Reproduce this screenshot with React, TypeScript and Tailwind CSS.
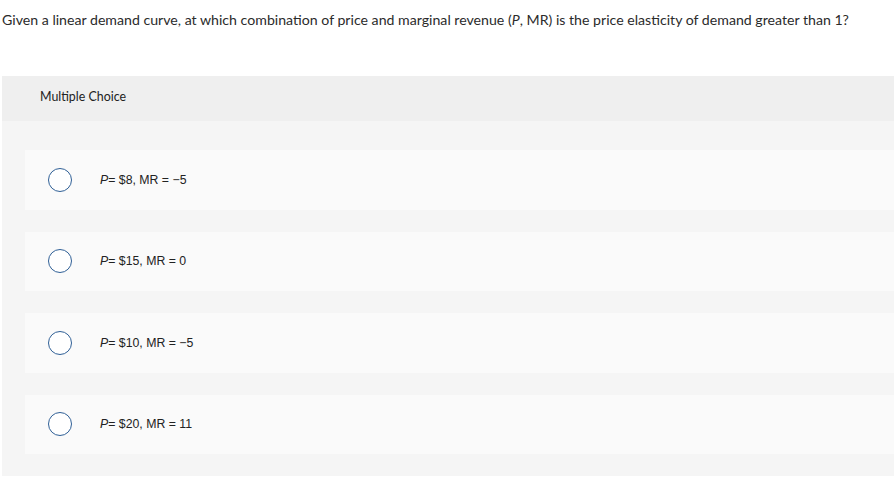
import React from "react";

const options = [
  { price: "$8", mr: "\u22125" },
  { price: "$15", mr: "0" },
  { price: "$10", mr: "\u22125" },
  { price: "$20", mr: "11" },
];

export default function App() {
  return (
    <div className="w-[894px] h-[477px] bg-white overflow-hidden pl-[2px]" style={{ fontFamily: "Lato, 'Liberation Sans', sans-serif" }}>
      <p className="pt-[12px] h-[76px] text-[14.15px] leading-[16px] text-[#2b2b2b]">
        Given a linear demand curve, at which combination of price and marginal revenue (<i>P</i>, MR) is the price elasticity of demand greater than 1?
      </p>
      <div className="w-[892px]">
        <div className="h-[45px] bg-[#efefef] flex items-center pb-[2px] pl-[38px] text-[12.4px] text-[#222]">
          Multiple Choice
        </div>
        <div className="bg-[#f5f5f5] pl-[23px] pt-[29px] pb-[22px] flex flex-col gap-[22px]">
          {options.map((o, i) => (
            <div key={i} className="h-[59.5px] bg-[#fafafa] flex items-center">
              <div className="ml-[23px] w-[24px] h-[24px] rounded-full border-[1.5px] border-[#2f5f96] bg-white" />
              <div className="ml-[28px] text-[12.3px] text-[#222]" style={{ fontFamily: "'Liberation Sans', Arial, sans-serif" }}>
                <i>P</i>= {o.price}, MR = {o.mr}
              </div>
            </div>
          ))}
        </div>
      </div>
    </div>
  );
}
